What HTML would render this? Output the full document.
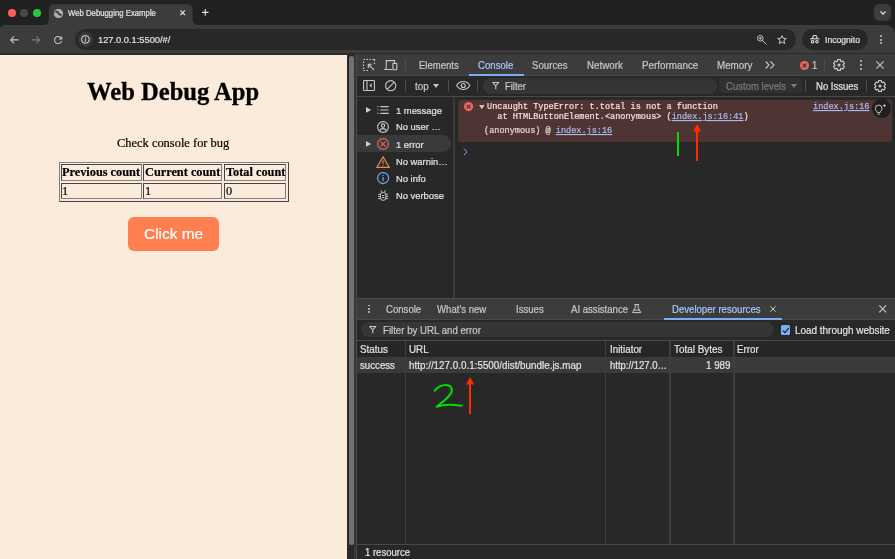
<!DOCTYPE html>
<html><head><meta charset="utf-8">
<style>
*{margin:0;padding:0;box-sizing:border-box}
html,body{width:895px;height:559px;overflow:hidden;background:#202121;font-family:"Liberation Sans",sans-serif}
.a{position:absolute}
.t{position:absolute;white-space:pre;line-height:1;will-change:transform;-webkit-text-stroke:0.2px currentColor;transform:scaleY(1.06);transform-origin:0 85%}
svg{position:absolute;overflow:visible}
</style></head><body>
<!-- ===== title bar ===== -->
<div class="a" style="left:0;top:0;width:895px;height:25px;background:#202121"></div>
<div class="a" style="left:7.9px;top:8.8px;width:8px;height:8px;border-radius:50%;background:#fe5f57"></div>
<div class="a" style="left:20.2px;top:8.8px;width:8px;height:8px;border-radius:50%;background:#484848"></div>
<div class="a" style="left:32.5px;top:8.8px;width:8px;height:8px;border-radius:50%;background:#2ac840"></div>
<!-- tab -->
<svg style="left:0;top:0" width="895" height="30" viewBox="0 0 895 30">
<path d="M42.5 25 Q48.8 25 48.8 19 V10 Q48.8 4.3 54.5 4.3 H187 Q192.6 4.3 192.6 10 V19 Q192.6 25 198.8 25 Z" fill="#3c3c3c"/></svg>
<svg style="left:54px;top:8.5px" width="9" height="9" viewBox="0 0 9 9"><circle cx="4.5" cy="4.5" r="4.1" fill="#a9b1bc" stroke="#bdbdbd" stroke-width="0.8"/><path d="M1.3 3.4C2.4 2.4 3.9 2.5 4 3.6C4.1 4.9 5.6 5.6 7.6 6.1" fill="none" stroke="#3a3a3a" stroke-width="1.7"/></svg>
<svg style="left:179.9px;top:10.4px" width="5.4" height="5.4" viewBox="0 0 5.4 5.4" stroke="#e3e3e3" stroke-width="1.1"><path d="M0.4 0.4L5 5M5 0.4L0.4 5"/></svg>
<svg style="left:201.8px;top:9.2px" width="6.5" height="6.8" viewBox="0 0 6.5 6.8" stroke="#e3e3e3" stroke-width="1.1"><path d="M3.25 0V6.8M0 3.4H6.5"/></svg>
<div class="a" style="left:874.1px;top:4.3px;width:17px;height:17.2px;border-radius:5px;background:#3c3c3c"></div>
<svg style="left:879.6px;top:11px" width="6" height="4" viewBox="0 0 6 4" fill="none" stroke="#e3e3e3" stroke-width="1.2"><path d="M0.5 0.5L3 3.2L5.5 0.5"/></svg>
<!-- tab text -->
<div class="t" style="left:68.3px;top:9.5px;font-size:7.77px;color:#e3e3e3">Web Debugging Example</div>
<!-- toolbar -->
<div class="a" style="left:0;top:25px;width:895px;height:28px;background:#3c3c3c;border-radius:5px 9px 0 0"></div>
<div class="a" style="left:0;top:53px;width:895px;height:1.5px;background:#2b2b2b"></div>
<!-- omnibox -->
<div class="a" style="left:74.5px;top:29px;width:721.5px;height:21px;background:#282828;border-radius:10.5px"></div>
<div class="a" style="left:77.7px;top:32px;width:15px;height:15px;background:#3a3a3a;border-radius:50%"></div>
<div class="t" style="left:97.5px;top:35.9px;font-size:9.31px;color:#e3e3e3">127.0.0.1:5500/#/</div>
<!-- incognito pill -->
<div class="a" style="left:802.3px;top:29px;width:65.5px;height:21px;background:#282828;border-radius:10.5px"></div>
<div class="t" style="left:824.9px;top:35.8px;font-size:8.62px;color:#e3e3e3">Incognito</div>


<!-- toolbar icons -->
<svg style="left:9.6px;top:35.6px" width="8.4" height="7.8" viewBox="0 0 8.4 7.8" fill="none" stroke="#c7c7c7" stroke-width="1.1"><path d="M8.4 3.9H0.8M4.1 0.4L0.7 3.9L4.1 7.4"/></svg>
<svg style="left:31.6px;top:35.6px" width="8.4" height="7.8" viewBox="0 0 8.4 7.8" fill="none" stroke="#7d7d7d" stroke-width="1.1"><path d="M0 3.9H7.6M4.3 0.4L7.7 3.9L4.3 7.4"/></svg>
<svg style="left:54.4px;top:35.6px" width="8.2" height="8.2" viewBox="4 4 16 16"><path fill="#c7c7c7" d="M17.65 6.35C16.2 4.9 14.21 4 12 4c-4.42 0-7.99 3.58-7.99 8s3.57 8 7.99 8c3.73 0 6.84-2.55 7.73-6h-2.08c-.82 2.33-3.04 4-5.65 4-3.31 0-6-2.69-6-6s2.69-6 6-6c1.66 0 3.14.69 4.22 1.78L13 11h7V4l-2.35 2.35z"/></svg>
<svg style="left:80.8px;top:35.1px" width="8.8" height="8.8" viewBox="0 0 8.8 8.8" fill="none" stroke="#e3e3e3" stroke-width="1"><circle cx="4.4" cy="4.4" r="3.9"/><path d="M4.4 3.7V6.6M4.4 2.1v0.9"/></svg>
<svg style="left:756.5px;top:34.6px" width="10" height="10" viewBox="0 0 10 10" fill="none" stroke="#c7c7c7" stroke-width="1"><circle cx="3.3" cy="3.3" r="2.8"/><path d="M5.4 5.4L9.4 9.4M3.3 1.9v2.8M1.9 3.3h2.8"/></svg>
<svg style="left:776.9px;top:35px" width="10" height="9.2" viewBox="0 0 10 9.2" fill="none" stroke="#c7c7c7" stroke-width="1" stroke-linejoin="round"><path d="M5 0.6L6.2 3.3L9.3 3.5L6.9 5.4L7.7 8.6L5 6.9L2.3 8.6L3.1 5.4L0.7 3.5L3.8 3.3Z"/></svg>
<svg style="left:809.9px;top:35.2px" width="9.6" height="8.6" viewBox="0 0 9.6 8.6" fill="none" stroke="#e3e3e3" stroke-width="1.1"><path d="M2.4 3.6L3.3 0.9Q3.5 0.5 4 0.5H5.6Q6.1 0.5 6.3 0.9L7.2 3.6"/><path d="M0.2 3.8H9.4"/><circle cx="2.6" cy="6.7" r="1.25"/><circle cx="7" cy="6.7" r="1.25"/></svg>
<div class="a" style="left:880px;top:35.4px;width:1.9px;height:1.9px;border-radius:50%;background:#c7c7c7"></div>
<div class="a" style="left:880px;top:38.9px;width:1.9px;height:1.9px;border-radius:50%;background:#c7c7c7"></div>
<div class="a" style="left:880px;top:42.4px;width:1.9px;height:1.9px;border-radius:50%;background:#c7c7c7"></div>
<!-- ===== page ===== -->
<div class="a" style="left:0;top:54.5px;width:347px;height:505px;background:#fbebda"></div>
<div class="t" style="left:87.2px;top:80.2px;font-family:'Liberation Serif',serif;transform:none;font-weight:bold;font-size:24.6px;color:#000;-webkit-text-stroke:0.3px #000">Web Debug App</div>
<div class="t" style="left:117px;top:136.6px;font-family:'Liberation Serif',serif;transform:none;font-size:12.45px;color:#000">Check console for bug</div>

<!-- table -->
<div class="a" style="left:58.5px;top:162px;width:230.5px;height:39.5px;border:1px solid;border-color:#808080 #454545 #454545 #808080"></div>
<div class="a" style="left:60.5px;top:164px;width:81px;height:16.5px;border:1px solid;border-color:#454545 #808080 #808080 #454545"></div>
<div class="a" style="left:143.3px;top:164px;width:78.7px;height:16.5px;border:1px solid;border-color:#454545 #808080 #808080 #454545"></div>
<div class="a" style="left:223.9px;top:164px;width:62.6px;height:16.5px;border:1px solid;border-color:#454545 #808080 #808080 #454545"></div>
<div class="a" style="left:60.5px;top:182.7px;width:81px;height:16.6px;border:1px solid;border-color:#454545 #808080 #808080 #454545"></div>
<div class="a" style="left:143.3px;top:182.7px;width:78.7px;height:16.6px;border:1px solid;border-color:#454545 #808080 #808080 #454545"></div>
<div class="a" style="left:223.9px;top:182.7px;width:62.6px;height:16.6px;border:1px solid;border-color:#454545 #808080 #808080 #454545"></div>
<div class="t" style="left:61.7px;top:166px;font-family:'Liberation Serif',serif;transform:none;font-weight:bold;font-size:12.3px;color:#000;-webkit-text-stroke:0.2px #000">Previous count</div>
<div class="t" style="left:144.8px;top:166px;font-family:'Liberation Serif',serif;transform:none;font-weight:bold;font-size:12.3px;color:#000;-webkit-text-stroke:0.2px #000">Current count</div>
<div class="t" style="left:225.5px;top:166px;font-family:'Liberation Serif',serif;transform:none;font-weight:bold;font-size:12.3px;color:#000;-webkit-text-stroke:0.2px #000">Total count</div>
<div class="t" style="left:61.7px;top:185.2px;font-family:'Liberation Serif',serif;transform:none;font-size:12.3px;color:#000">1</div>
<div class="t" style="left:144.8px;top:185.2px;font-family:'Liberation Serif',serif;transform:none;font-size:12.3px;color:#000">1</div>
<div class="t" style="left:225.5px;top:185.2px;font-family:'Liberation Serif',serif;transform:none;font-size:12.3px;color:#000">0</div>
<div class="a" style="left:128px;top:217px;width:91px;height:34px;background:#ff7f50;border-radius:6px"></div>
<div class="t" style="left:144px;top:226.1px;font-size:15.45px;color:#fff;transform:none">Click me</div>

<!-- ===== devtools ===== -->
<div class="a" style="left:347px;top:54px;width:10px;height:505px;background:#2a2a2a"></div>
<div class="a" style="left:349.2px;top:56.3px;width:5px;height:488.3px;background:#727272;border-radius:3px"></div>
<div class="a" style="left:354.3px;top:54px;width:2px;height:505px;background:#363636"></div><div class="a" style="left:356.2px;top:54px;width:1px;height:505px;background:#4a4a4a"></div>
<div class="a" style="left:357px;top:54px;width:538px;height:505px;background:#282828"></div>
<!-- tab bar -->
<div class="a" style="left:357px;top:54px;width:538px;height:21px;background:#3c3c3c"></div>
<div class="a" style="left:357px;top:75px;width:538px;height:1px;background:#4a4a4a"></div>
<div class="a" style="left:357px;top:96px;width:538px;height:1px;background:#4a4a4a"></div>
<div class="t" style="left:419.3px;top:60.6px;font-size:9.52px;color:#c7c7c7">Elements</div>
<div class="t" style="left:478px;top:60.6px;font-size:9.65px;color:#a8c7fa">Console</div>
<div class="a" style="left:469px;top:74px;width:55px;height:2px;background:#7cacf8"></div>
<div class="t" style="left:532.4px;top:60.6px;font-size:9.7px;color:#c7c7c7">Sources</div>
<div class="t" style="left:587.3px;top:60.6px;font-size:9.75px;color:#c7c7c7">Network</div>
<div class="t" style="left:642.1px;top:60.6px;font-size:9.83px;color:#c7c7c7">Performance</div>
<div class="t" style="left:716.8px;top:60.6px;font-size:9.77px;color:#c7c7c7">Memory</div>


<!-- devtools tabbar icons -->
<svg style="left:363px;top:59px" width="12" height="12" viewBox="0 0 12 12" fill="none" stroke="#c7c7c7" stroke-width="1.1">
<path d="M0.5 0.5h1.5M3.5 0.5h1.5M6.5 0.5h1.5M9.5 0.5h2v1.5M11.5 3.5v1.5M0.5 2.5v1.5M0.5 5.5v1.5M0.5 8.5v1.5M0.5 11.5h1.5M3.5 11.5h1.5"/>
<path d="M5.5 5.5L11.2 11.2M5.3 5.3h3.6M5.3 5.3v3.6"/></svg>
<svg style="left:384px;top:60px" width="14" height="11" viewBox="0 0 14 11" fill="none" stroke="#c7c7c7" stroke-width="1.1"><path d="M10.5 2.8V0.6H2.2V9.3M0.2 9.5h7.8"/><rect x="8.9" y="3.4" width="3.9" height="6.3" rx="0.5"/></svg>
<div class="a" style="left:404.5px;top:59px;width:1px;height:12px;background:#4d4d4d"></div>
<!-- right side of tabbar -->
<svg style="left:764.5px;top:61px" width="10" height="8" viewBox="0 0 10 8" fill="none" stroke="#c7c7c7" stroke-width="1.1"><path d="M0.7 0.5L4 4L0.7 7.5M5.5 0.5L9 4L5.5 7.5"/></svg>
<div class="t" style="left:601px;top:60.6px;font-size:9.6px;color:#c7c7c7"></div>
<svg style="left:800px;top:60.8px" width="9" height="9" viewBox="0 0 9 9"><circle cx="4.5" cy="4.5" r="4.5" fill="#e46962"/><path d="M2.7 2.7L6.3 6.3M6.3 2.7L2.7 6.3" stroke="#3a2a2a" stroke-width="1.1"/></svg>
<div class="t" style="left:811.5px;top:61px;font-size:9.6px;color:#c7c7c7">1</div>
<div class="a" style="left:823.9px;top:59.3px;width:1px;height:11.3px;background:#4d4d4d"></div>
<svg style="left:832.9px;top:58.9px" width="12" height="12" viewBox="0 0 12 12" fill="none" stroke="#c7c7c7" stroke-width="1.15" stroke-linejoin="round"><path d="M10.17 6.52 L11.41 7.46 L9.97 9.95 L8.53 9.35 L7.64 9.87 L7.44 11.41 L4.56 11.41 L4.36 9.87 L3.47 9.35 L2.03 9.95 L0.59 7.46 L1.83 6.52 L1.83 5.48 L0.59 4.54 L2.03 2.05 L3.47 2.65 L4.36 2.13 L4.56 0.59 L7.44 0.59 L7.64 2.13 L8.53 2.65 L9.97 2.05 L11.41 4.54 L10.17 5.48Z"/><circle cx="6" cy="6" r="1.5" fill="#c7c7c7" stroke="none"/></svg>
<div class="a" style="left:859.8px;top:60.3px;width:1.9px;height:1.9px;border-radius:50%;background:#c7c7c7"></div>
<div class="a" style="left:859.8px;top:64px;width:1.9px;height:1.9px;border-radius:50%;background:#c7c7c7"></div>
<div class="a" style="left:859.8px;top:67.7px;width:1.9px;height:1.9px;border-radius:50%;background:#c7c7c7"></div>
<svg style="left:876.1px;top:61px" width="8" height="8" viewBox="0 0 8 8" stroke="#c7c7c7" stroke-width="1.1"><path d="M0.3 0.3L7.7 7.7M7.7 0.3L0.3 7.7"/></svg>

<!-- console toolbar -->
<svg style="left:363px;top:80px" width="12" height="11" viewBox="0 0 12 11" fill="none" stroke="#c7c7c7" stroke-width="1.1"><rect x="0.55" y="0.55" width="10.9" height="9.9" rx="0.8"/><path d="M4 0.5v10"/><path d="M8.6 3.2L6.4 5.5L8.6 7.8z" fill="#c7c7c7" stroke="none"/></svg>
<svg style="left:384.7px;top:80.1px" width="12" height="12" viewBox="0 0 12 12" fill="none" stroke="#c7c7c7" stroke-width="1.1"><circle cx="5.7" cy="5.7" r="5.1"/><path d="M9.3 2.1L2.1 9.3"/></svg>
<div class="a" style="left:404.5px;top:79.5px;width:1px;height:12px;background:#4d4d4d"></div>
<div class="t" style="left:415px;top:81.6px;font-size:9.8px;color:#c7c7c7">top</div>
<svg style="left:433.3px;top:84.2px" width="6" height="4" viewBox="0 0 6 4"><path d="M0 0h6L3 4z" fill="#c7c7c7"/></svg>
<div class="a" style="left:448px;top:79.5px;width:1px;height:12px;background:#4d4d4d"></div>
<svg style="left:455.5px;top:81.3px" width="14.5" height="9" viewBox="0 0 14.5 9" fill="none" stroke="#c7c7c7" stroke-width="1.1"><path d="M0.6 4.5C2.5 1.6 4.8 0.55 7.25 0.55S12 1.6 13.9 4.5C12 7.4 9.7 8.45 7.25 8.45S2.5 7.4 0.6 4.5z"/><circle cx="7.25" cy="4.5" r="2"/></svg>
<div class="a" style="left:476.5px;top:79.5px;width:1px;height:12px;background:#4d4d4d"></div>
<div class="a" style="left:483px;top:78px;width:233.8px;height:15.5px;border-radius:7.75px;background:#353535"></div>
<svg style="left:491.6px;top:82.1px" width="7.5" height="7.2" viewBox="0 0 7.5 7.2" fill="none" stroke="#c7c7c7" stroke-width="1.1"><path d="M0.3 0.55h6.9M0.8 0.55L3.75 3.8L6.7 0.55M3.75 3.6V7.2"/></svg>
<div class="t" style="left:504.6px;top:81.6px;font-size:9.45px;color:#c7c7c7">Filter</div>
<div class="a" style="left:718.9px;top:78.1px;width:83.1px;height:15.4px;border-radius:4px;background:#303030"></div>
<div class="t" style="left:726px;top:81.8px;font-size:9.55px;color:#7b7b7b">Custom levels</div>
<svg style="left:790.9px;top:83.9px" width="6" height="4" viewBox="0 0 6 4"><path d="M0 0h6L3 4z" fill="#7b7b7b"/></svg>
<div class="a" style="left:805px;top:79.6px;width:1px;height:12px;background:#4d4d4d"></div>
<div class="t" style="left:815.8px;top:81.8px;font-size:9.54px;color:#e3e3e3">No Issues</div>
<div class="a" style="left:866.3px;top:79.6px;width:1px;height:12px;background:#4d4d4d"></div>
<svg style="left:874.2px;top:80px" width="12" height="12" viewBox="0 0 12 12" fill="none" stroke="#c7c7c7" stroke-width="1.15" stroke-linejoin="round"><path d="M10.17 6.52 L11.41 7.46 L9.97 9.95 L8.53 9.35 L7.64 9.87 L7.44 11.41 L4.56 11.41 L4.36 9.87 L3.47 9.35 L2.03 9.95 L0.59 7.46 L1.83 6.52 L1.83 5.48 L0.59 4.54 L2.03 2.05 L3.47 2.65 L4.36 2.13 L4.56 0.59 L7.44 0.59 L7.64 2.13 L8.53 2.65 L9.97 2.05 L11.41 4.54 L10.17 5.48Z"/><circle cx="6" cy="6" r="1.5" fill="#c7c7c7" stroke="none"/></svg>

<!-- sidebar -->
<div class="a" style="left:453.4px;top:97px;width:1.5px;height:201.5px;background:#3c3c3c"></div>
<div class="a" style="left:357px;top:135.3px;width:94px;height:17px;border-radius:0 8.5px 8.5px 0;background:#3a3a3a"></div>
<svg style="left:365.5px;top:106.9px" width="5.5" height="5.8" viewBox="0 0 5.5 5.8"><path d="M0 0L5.2 2.9L0 5.8z" fill="#d0d0d0"/></svg>
<svg style="left:365.5px;top:141.1px" width="5.5" height="5.8" viewBox="0 0 5.5 5.8"><path d="M0 0L5.2 2.9L0 5.8z" fill="#d0d0d0"/></svg>
<svg style="left:376.8px;top:105.8px" width="12" height="8" viewBox="0 0 12 8" fill="none" stroke="#c7c7c7" stroke-width="1.1"><path d="M0.4 0.6h1M0.4 4h1M0.4 7.4h1M3.3 0.6h8.3M3.3 4h8.3M3.3 7.4h8.3"/></svg>
<svg style="left:376.9px;top:120.7px" width="12" height="12" viewBox="0 0 12 12" fill="none" stroke="#c7c7c7" stroke-width="1.1"><circle cx="6" cy="6" r="5.4"/><circle cx="6" cy="4.6" r="1.7"/><path d="M2.6 9.7C3.3 8.3 4.5 7.6 6 7.6S8.7 8.3 9.4 9.7"/></svg>
<svg style="left:376.9px;top:137.8px" width="12" height="12" viewBox="0 0 12 12" fill="none" stroke="#e46962" stroke-width="1.1"><circle cx="6" cy="6" r="5.4"/><path d="M3.4 3.4L8.6 8.6M8.6 3.4L3.4 8.6"/></svg>
<svg style="left:375.9px;top:156.1px" width="14" height="12" viewBox="0 0 14 12" fill="none" stroke="#f28b50" stroke-width="1.1"><path d="M7 0.9L13.2 11.4H0.8z" stroke-linejoin="miter"/><path d="M7 4.3v3.8M7 9v1" /></svg>
<svg style="left:376.8px;top:172.4px" width="12.2" height="12.2" viewBox="0 0 12 12" fill="none" stroke="#7cacf8" stroke-width="1.1"><circle cx="6" cy="6" r="5.4"/><path d="M6 5v4M6 3v1"/></svg>
<svg style="left:377.8px;top:189.9px" width="10.3" height="11" viewBox="0 0 10 11" fill="none" stroke="#c7c7c7" stroke-width="1"><path d="M2.8 0.3L3.8 2M7.2 0.3L6.2 2"/><rect x="2.3" y="2.4" width="5.4" height="7.9" rx="2.5"/><path d="M0 4.2h2.3M0 6.4h2.3M0 8.6h2.3M7.7 4.2h2.3M7.7 6.4h2.3M7.7 8.6h2.3M3.8 5.6h2.4M3.8 7.6h2.4"/></svg>
<div class="t" style="left:395.5px;top:105.5px;font-size:9.4px;color:#e3e3e3">1 message</div>
<div class="t" style="left:395.5px;top:122.4px;font-size:9.4px;color:#e3e3e3">No user …</div>
<div class="t" style="left:395.5px;top:139.5px;font-size:9.4px;color:#e3e3e3">1 error</div>
<div class="t" style="left:395.5px;top:156.8px;font-size:9.4px;color:#e3e3e3">No warnin…</div>
<div class="t" style="left:395.5px;top:173.8px;font-size:9.4px;color:#e3e3e3">No info</div>
<div class="t" style="left:395.5px;top:190.7px;font-size:9.4px;color:#e3e3e3">No verbose</div>

<!-- console message -->
<div class="a" style="left:457.5px;top:99.7px;width:434.3px;height:42.2px;border-radius:3px;background:#4e3534"></div>
<svg style="left:463.8px;top:102px" width="9.2" height="9.2" viewBox="0 0 9 9"><circle cx="4.5" cy="4.5" r="4.5" fill="#e46962"/><path d="M2.8 2.8L6.2 6.2M6.2 2.8L2.8 6.2" stroke="#4a2f2e" stroke-width="1.1"/></svg>
<svg style="left:478.7px;top:104.9px" width="5.6" height="4.3" viewBox="0 0 5.6 4.3"><path d="M0 0h5.6L2.8 4.3z" fill="#c7c7c7"/></svg>
<div class="t" style="left:487.3px;top:103px;font-family:'Liberation Mono',monospace;font-size:8.55px;transform:scaleY(1.1);transform-origin:0 80%;color:#f9dedc">Uncaught TypeError: t.total is not a function</div>
<div class="t" style="left:486.6px;top:112.7px;font-family:'Liberation Mono',monospace;font-size:8.55px;transform:scaleY(1.1);transform-origin:0 80%;color:#f9dedc">  at HTMLButtonElement.&lt;anonymous&gt; (<span style="color:#a9bdf2;text-decoration:underline">index.js:16:41</span>)</div>
<div class="t" style="left:484.1px;top:126.7px;font-family:'Liberation Mono',monospace;font-size:8.55px;transform:scaleY(1.1);transform-origin:0 80%;color:#e3d5d4">(anonymous) @ <span style="color:#a9bdf2;text-decoration:underline">index.js:16</span></div>
<div class="t" style="left:813px;top:102.5px;font-family:'Liberation Mono',monospace;font-size:8.55px;transform:scaleY(1.1);transform-origin:0 80%;color:#a9bdf2;text-decoration:underline">index.js:16</div>
<div class="a" style="left:871.7px;top:99.2px;width:19px;height:19px;border-radius:50%;background:#1f1f1f"></div>
<svg style="left:872px;top:100px" width="18" height="18" viewBox="0 0 18 18" fill="none" stroke="#c7c7c7" stroke-width="1"><path d="M5.3 12.6C5.3 11.4 3.4 10.6 3.4 8.3a3.3 3.3 0 0 1 6.6 0C10 10.6 8.1 11.4 8.1 12.6z"/><path d="M5.6 14.2h2.2"/><path d="M12.4 4.2v2.8M11 5.6h2.8" stroke-width="0.9"/></svg>
<svg style="left:463.2px;top:148.3px" width="5" height="8" viewBox="0 0 5 8" fill="none" stroke="#7cacf8" stroke-width="1"><path d="M0.8 0.6L4 3.9L0.8 7.2"/></svg>
<!-- annotations -->
<div class="a" style="left:676.5px;top:132px;width:2.2px;height:24px;background:#00e000"></div>
<div class="a" style="left:696.1px;top:130.5px;width:2.1px;height:30px;background:#ff2a00"></div>
<svg style="left:693px;top:124px" width="8.2" height="7.4" viewBox="0 0 8.2 7.4"><path d="M4.1 0L8.2 7.4H0z" fill="#ff2a00"/></svg>

<!-- ===== drawer ===== -->
<div class="a" style="left:357px;top:298px;width:538px;height:1px;background:#4a4a4a"></div>
<div class="a" style="left:357px;top:299px;width:538px;height:19.5px;background:#3c3c3c"></div>
<div class="a" style="left:357px;top:318.8px;width:538px;height:1px;background:#4a4a4a"></div>
<div class="a" style="left:367.8px;top:304.6px;width:1.9px;height:1.9px;border-radius:50%;background:#c7c7c7"></div>
<div class="a" style="left:367.8px;top:308px;width:1.9px;height:1.9px;border-radius:50%;background:#c7c7c7"></div>
<div class="a" style="left:367.8px;top:311.3px;width:1.9px;height:1.9px;border-radius:50%;background:#c7c7c7"></div>
<div class="t" style="left:385.8px;top:304.6px;font-size:9.6px;color:#c7c7c7">Console</div>
<div class="t" style="left:437.4px;top:304.6px;font-size:9.6px;color:#c7c7c7">What's new</div>
<div class="t" style="left:515.5px;top:304.6px;font-size:9.6px;color:#c7c7c7">Issues</div>
<div class="t" style="left:570.7px;top:304.6px;font-size:9.6px;color:#c7c7c7">AI assistance</div>
<svg style="left:632.4px;top:304.3px" width="9.4" height="9.2" viewBox="0 0 9.4 9.2" fill="none" stroke="#c7c7c7" stroke-width="1"><path d="M2.4 0.5h4.6M3.3 0.5v3L0.6 8.6h8.2L6.1 3.5v-3M1.9 6.1h5.6"/></svg>
<div class="t" style="left:671.9px;top:304.6px;font-size:9.6px;color:#a8c7fa">Developer resources</div>
<svg style="left:770.3px;top:305.8px" width="6" height="6" viewBox="0 0 6 6" stroke="#c7c7c7" stroke-width="1"><path d="M0.3 0.3L5.7 5.7M5.7 0.3L0.3 5.7"/></svg>
<div class="a" style="left:664px;top:318px;width:118px;height:1.8px;background:#7cacf8"></div>
<svg style="left:879.2px;top:305.2px" width="7.4" height="7.6" viewBox="0 0 7.4 7.6" stroke="#c7c7c7" stroke-width="1.1"><path d="M0.3 0.3L7.1 7.3M7.1 0.3L0.3 7.3"/></svg>
<!-- filter row -->
<div class="a" style="left:361px;top:321.7px;width:412.6px;height:15.7px;border-radius:7.85px;background:#353535"></div>
<svg style="left:369.2px;top:326.3px" width="7.5" height="7.2" viewBox="0 0 7.5 7.2" fill="none" stroke="#c7c7c7" stroke-width="1.1"><path d="M0.3 0.55h6.9M0.8 0.55L3.75 3.8L6.7 0.55M3.75 3.6V7.2"/></svg>
<div class="t" style="left:382.6px;top:325.9px;font-size:9.67px;color:#c7c7c7">Filter by URL and error</div>
<div class="a" style="left:780.7px;top:325.4px;width:9.2px;height:9.2px;border-radius:1.5px;background:#7cacf8"></div>
<svg style="left:781.5px;top:326.5px" width="7.6" height="7" viewBox="0 0 7.6 7" fill="none" stroke="#1f1f1f" stroke-width="1.2"><path d="M1 3.6L3 5.6L6.7 1.2"/></svg>
<div class="t" style="left:795px;top:325.5px;font-size:9.93px;color:#e3e3e3">Load through website</div>
<div class="a" style="left:357px;top:339.8px;width:538px;height:1px;background:#4a4a4a"></div>
<!-- table -->
<div class="a" style="left:357px;top:340.8px;width:538px;height:16.2px;background:#262626"></div>
<div class="a" style="left:357px;top:357px;width:538px;height:15.5px;background:#3a3a3a"></div>
<div class="a" style="left:357px;top:356.5px;width:538px;height:1px;background:#3a3a3a"></div>
<div class="a" style="left:404.9px;top:340.8px;width:1.3px;height:203.8px;background:#3f3f3f"></div>
<div class="a" style="left:605.1px;top:340.8px;width:1.3px;height:203.8px;background:#3f3f3f"></div>
<div class="a" style="left:669.4px;top:340.8px;width:1.3px;height:203.8px;background:#3f3f3f"></div>
<div class="a" style="left:733.4px;top:340.8px;width:1.3px;height:203.8px;background:#3f3f3f"></div>
<div class="a" style="left:357px;top:544.3px;width:538px;height:1px;background:#474747"></div>
<div class="t" style="left:360.4px;top:344.6px;font-size:9.88px;color:#e3e3e3">Status</div>
<div class="t" style="left:409.3px;top:344.6px;font-size:9.8px;color:#e3e3e3">URL</div>
<div class="t" style="left:609.7px;top:344.6px;font-size:9.8px;color:#e3e3e3">Initiator</div>
<div class="t" style="left:674.1px;top:344.6px;font-size:9.92px;color:#e3e3e3">Total Bytes</div>
<div class="t" style="left:737.4px;top:344.6px;font-size:9.8px;color:#e3e3e3">Error</div>
<div class="t" style="left:360.4px;top:360.8px;font-size:9.69px;color:#e3e3e3">success</div>
<div class="t" style="left:409.3px;top:360.8px;font-size:9.85px;color:#e3e3e3">http://127.0.0.1:5500/dist/bundle.js.map</div>
<div class="t" style="left:609.7px;top:360.8px;font-size:9.5px;color:#e3e3e3">http://127.0…</div>
<div class="t" style="left:706px;top:360.8px;font-size:9.8px;color:#e3e3e3">1 989</div>
<!-- status bar -->
<div class="t" style="left:365.4px;top:548px;font-size:9.52px;color:#e3e3e3">1 resource</div>
<!-- annotation 2 -->
<svg style="left:425px;top:370px" width="60" height="50" viewBox="0 0 60 50" fill="none"><path d="M9.8 20.6C12.5 17 17 14.8 21.5 14.9C25.5 15 27.2 17.8 26.8 21.2C26.2 25.5 20 30.5 11.6 36.7C18 34.6 28 34.4 36.7 35.8" stroke="#00e000" stroke-width="2" stroke-linecap="round" stroke-linejoin="round"/></svg>
<div class="a" style="left:469.3px;top:384px;width:2.1px;height:30px;background:#ff2a00"></div>
<svg style="left:466px;top:377px" width="8.2" height="7.4" viewBox="0 0 8.2 7.4"><path d="M4.1 0L8.2 7.4H0z" fill="#ff2a00"/></svg>
</body></html>
